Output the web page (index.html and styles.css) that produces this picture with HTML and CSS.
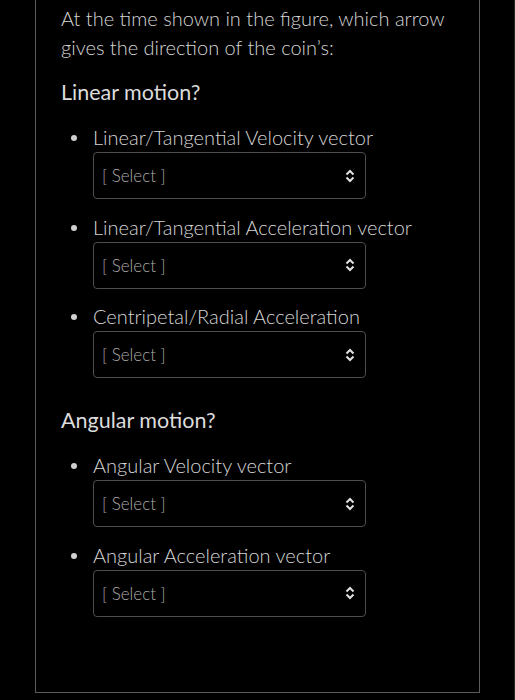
FILE: index.html
```html
<!DOCTYPE html>
<html lang="en">
<head>
  <meta charset="UTF-8">
  <meta name="viewport" content="width=device-width, initial-scale=1.0">
  <title>Quiz question</title>
  <link rel="stylesheet" href="styles.css">
</head>
<body>
  <div class="page">
    <div class="card">
      <p class="prompt">At the time shown in the figure, which arrow gives the direction of the coin’s:</p>

      <!-- Movimento linear -->
      <h3 class="section-title">Linear motion?</h3>
      <ul class="answers">
        <li>
          Linear/Tangential Velocity vector
          <div class="select"><span>[ Select ]</span>
            <svg width="12" height="14" viewBox="0 0 12 14"><path d="M2.5 5.5 L6 2 L9.5 5.5 M2.5 8.5 L6 12 L9.5 8.5" fill="none" stroke="#e2e2e2" stroke-width="2"/></svg>
          </div>
        </li>
        <li>
          Linear/Tangential Acceleration vector
          <div class="select"><span>[ Select ]</span>
            <svg width="12" height="14" viewBox="0 0 12 14"><path d="M2.5 5.5 L6 2 L9.5 5.5 M2.5 8.5 L6 12 L9.5 8.5" fill="none" stroke="#e2e2e2" stroke-width="2"/></svg>
          </div>
        </li>
        <li>
          Centripetal/Radial Acceleration
          <div class="select"><span>[ Select ]</span>
            <svg width="12" height="14" viewBox="0 0 12 14"><path d="M2.5 5.5 L6 2 L9.5 5.5 M2.5 8.5 L6 12 L9.5 8.5" fill="none" stroke="#e2e2e2" stroke-width="2"/></svg>
          </div>
        </li>
      </ul>

      <!-- Movimento angular -->
      <h3 class="section-title">Angular motion?</h3>
      <ul class="answers">
        <li>
          Angular Velocity vector
          <div class="select"><span>[ Select ]</span>
            <svg width="12" height="14" viewBox="0 0 12 14"><path d="M2.5 5.5 L6 2 L9.5 5.5 M2.5 8.5 L6 12 L9.5 8.5" fill="none" stroke="#e2e2e2" stroke-width="2"/></svg>
          </div>
        </li>
        <li>
          Angular Acceleration vector
          <div class="select"><span>[ Select ]</span>
            <svg width="12" height="14" viewBox="0 0 12 14"><path d="M2.5 5.5 L6 2 L9.5 5.5 M2.5 8.5 L6 12 L9.5 8.5" fill="none" stroke="#e2e2e2" stroke-width="2"/></svg>
          </div>
        </li>
      </ul>
    </div>
  </div>
</body>
</html>
```

FILE: styles.css
```css
/* Fundo */
body {
  margin: 0;
  padding: 0;
  background: #000;
  font-family: Lato, 'Liberation Sans', Arial, sans-serif;
  color: #d6d6d6;
}

.page {
  width: 515px;
  height: 700px;
  box-sizing: border-box;
  border-right: 1px solid #262626;
}

/* Caixa da pergunta */
.card {
  margin-left: 35px;
  width: 445px;
  height: 693px;
  box-sizing: border-box;
  border: 1px solid #5c5c5c;
  border-top: none;
  padding: 4px 0 0 25px;
}

.prompt {
  margin: 0;
  font-size: 20px;
  font-weight: 300;
  line-height: 29px;
  width: 400px;
}

.section-title {
  margin: 16px 0 0;
  font-size: 21.5px;
  font-weight: 400;
  line-height: 29px;
  color: #dcdcdc;
}

/* Lista de respostas */
.answers {
  margin: 16px 0 0;
  padding-left: 32px;
  list-style: none;
}

.answers + .section-title {
  margin-top: 28px;
}

.answers li {
  position: relative;
  font-size: 20px;
  font-weight: 300;
  line-height: 29px;
  margin-bottom: 13.5px;
}

/* Marcador */
.answers li::before {
  content: "";
  position: absolute;
  left: -22px;
  top: 12px;
  width: 6px;
  height: 6px;
  border-radius: 50%;
  background: #cfcfcf;
}

.select {
  width: 273px;
  height: 47px;
  box-sizing: border-box;
  border: 1px solid #4d4d4d;
  border-radius: 4px;
  display: flex;
  align-items: center;
  justify-content: space-between;
  padding: 0 9px 0 8px;
  font-size: 17px;
  font-weight: 300;
  color: #ababab;
}

.select svg {
  display: block;
}
```
